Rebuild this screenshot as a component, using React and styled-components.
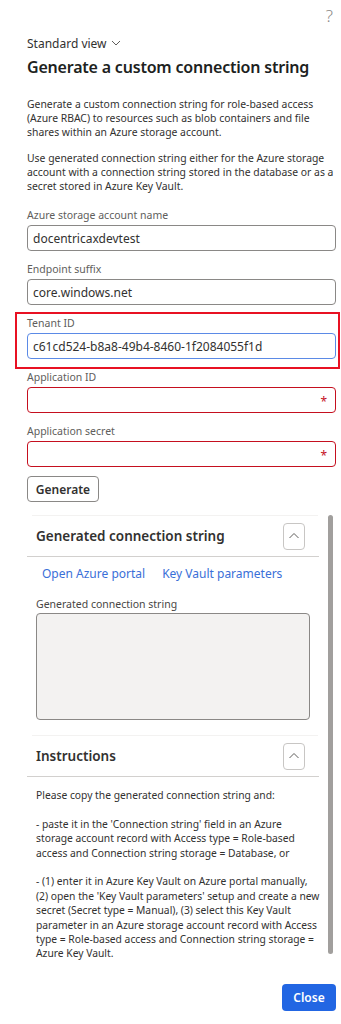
import { createGlobalStyle } from "styled-components"
import styled from "styled-components"

const GlobalStyle = createGlobalStyle`
    html, body {
        margin: 0;
        padding: 0;
        background: #ffffff;
    }
    body {
        font-family: "Segoe UI", "Noto Sans", sans-serif;
        color: #323130;
    }
`

// Chevron icons used by the view selector and the FastTab toggles
const ChevronDown = () => (
    <svg width="10" height="10" viewBox="0 0 10 10">
        <path d="M1 3 L5 7 L9 3" fill="none" stroke="#605e5c" strokeWidth="1" />
    </svg>
)

const ChevronUp = () => (
    <svg width="12" height="12" viewBox="0 0 12 12">
        <path d="M1.5 8 L6 3.5 L10.5 8" fill="none" stroke="#605e5c" strokeWidth="1" />
    </svg>
)

// One label + input pair
const Field = ({ label, value, required, focused, highlighted }) => {
    return (
        <FieldBox highlighted={highlighted}>
            <Label>{label}</Label>
            <InputBox required={required} focused={focused}>
                <span>{value}</span>
                {required && <Asterisk>*</Asterisk>}
            </InputBox>
        </FieldBox>
    )
}

const FastTab = ({ title, children }) => {
    return (
        <section>
            <Separator />
            <TabHeader>
                <TabTitle>{title}</TabTitle>
                <ToggleButton><ChevronUp /></ToggleButton>
            </TabHeader>
            {children}
        </section>
    )
}

const App = () => {
    return (
        <Page>
            <GlobalStyle />
            <HelpRow>?</HelpRow>
            <ViewSelector>Standard view <ChevronDown /></ViewSelector>
            <Title>Generate a custom connection string</Title>

            <Description>
                Generate a custom connection string for role-based access<br />
                (Azure RBAC) to resources such as blob containers and file<br />
                shares within an Azure storage account.
            </Description>
            <Description>
                Use generated connection string either for the Azure storage<br />
                account with a connection string stored in the database or as a<br />
                secret stored in Azure Key Vault.
            </Description>

            <Fields>
                <Field label="Azure storage account name" value="docentricaxdevtest" />
                <Field label="Endpoint suffix" value="core.windows.net" />
                <Field label="Tenant ID" value="c61cd524-b8a8-49b4-8460-1f2084055f1d" focused highlighted />
                <Field label="Application ID" value="" required />
                <Field label="Application secret" value="" required />
            </Fields>

            <GenerateButton>Generate</GenerateButton>

            <ScrollArea>
                <ScrollContent>
                    <FastTab title="Generated connection string">
                        <Links>
                            <Link>Open Azure portal</Link>
                            <Link>Key Vault parameters</Link>
                        </Links>
                        <OutputBlock>
                            <SmallLabel>Generated connection string</SmallLabel>
                            <OutputArea />
                        </OutputBlock>
                    </FastTab>
                    <FastTab title="Instructions">
                        <Instructions>
                            <p>Please copy the generated connection string and:</p>
                            <p>
                                - paste it in the 'Connection string' field in an Azure<br />
                                storage account record with Access type = Role-based<br />
                                access and Connection string storage = Database, or
                            </p>
                            <p>
                                - (1) enter it in Azure Key Vault on Azure portal manually,<br />
                                (2) open the 'Key Vault parameters' setup and create a new<br />
                                secret (Secret type = Manual), (3) select this Key Vault<br />
                                parameter in an Azure storage account record with Access<br />
                                type = Role-based access and Connection string storage =<br />
                                Azure Key Vault.
                            </p>
                        </Instructions>
                    </FastTab>
                </ScrollContent>
                <ScrollTrack>
                    <ScrollThumb />
                </ScrollTrack>
            </ScrollArea>

            <Footer>
                <CloseButton>Close</CloseButton>
            </Footer>
        </Page>
    )
}

const Page = styled.div`
    width: 341px;
    height: 1024px;
    box-sizing: border-box;
    padding: 0 5px 0 27px;
    display: flex;
    flex-direction: column;
    overflow: hidden;
`

const HelpRow = styled.div`
    height: 30px;
    display: flex;
    justify-content: flex-end;
    align-items: center;
    padding-right: 3px;
    font-size: 17px;
    font-weight: 300;
    color: #8a8886;
`

const ViewSelector = styled.div`
    display: flex;
    align-items: center;
    gap: 4px;
    height: 26px;
    font-size: 12px;
    color: #323130;
`

const Title = styled.h1`
    margin: 0;
    height: 22px;
    line-height: 22px;
    font-size: 16px;
    letter-spacing: -0.2px;
    font-weight: 600;
    color: #201f1e;
`

const Description = styled.p`
    margin: 19px 0 0;
    font-size: 10.4px;
    line-height: 14px;
    white-space: nowrap;
    color: #323130;

    & + & {
        margin-top: 12px;
    }
`

const Fields = styled.div`
    display: flex;
    flex-direction: column;
    gap: 11px;
    margin-top: 15px;
`

const FieldBox = styled.div`
    position: relative;
    display: flex;
    flex-direction: column;
    gap: 3px;

    &::after {
        content: "";
        display: ${({ highlighted }) => highlighted ? "block" : "none"};
        position: absolute;
        top: -4px;
        left: -12px;
        right: -4px;
        bottom: -10px;
        border: 2px solid #e81123;
        pointer-events: none;
    }
`

const Label = styled.div`
    font-size: 10.5px;
    line-height: 14px;
    color: #605e5c;
`

const InputBox = styled.div`
    height: 26px;
    box-sizing: border-box;
    display: flex;
    align-items: center;
    justify-content: space-between;
    padding: 0 8px 0 5px;
    border: 1px solid ${({ required, focused }) => required ? "#c50f1f" : focused ? "#5b8ae6" : "#8a8886"};
    border-radius: 4px;
    font-size: 12px;
    color: #323130;
    background: #ffffff;
`

const Asterisk = styled.span`
    color: #c50f1f;
    font-size: 12px;
    padding-top: 3px;
`

const GenerateButton = styled.button`
    align-self: flex-start;
    margin-top: 9px;
    width: 72px;
    height: 26px;
    border: 1px solid #8a8886;
    border-radius: 4px;
    background: #ffffff;
    font-family: inherit;
    font-size: 12px;
    font-weight: 600;
    color: #323130;
    padding: 0;
`

const ScrollArea = styled.div`
    display: flex;
    margin-top: 13px;
    height: 455px;
    overflow: hidden;
`

const ScrollContent = styled.div`
    width: 292px;
`

const ScrollTrack = styled.div`
    margin-left: 9px;
    width: 5px;
`

const ScrollThumb = styled.div`
    width: 5px;
    height: 439px;
    border-radius: 3px;
    background: #a19f9d;
`

const Separator = styled.div`
    height: 1px;
    margin: 0 1px 0 5px;
    background: #f3f2f1;
`

const TabHeader = styled.div`
    display: flex;
    align-items: center;
    justify-content: space-between;
    height: 40px;
    padding: 0 14px 0 9px;
    border-bottom: 1px solid #d2d0ce;
`

const TabTitle = styled.h2`
    margin: 0;
    font-size: 13.5px;
    font-weight: 600;
    color: #323130;
`

const ToggleButton = styled.div`
    width: 22px;
    height: 27px;
    box-sizing: border-box;
    display: flex;
    align-items: center;
    justify-content: center;
    border: 1px solid #c8c6c4;
    border-radius: 4px;
    background: #ffffff;
`

const Links = styled.div`
    display: flex;
    gap: 17px;
    padding: 7px 0 0 15px;
    height: 18px;
    align-items: center;
`

const Link = styled.span`
    font-size: 12px;
    color: #3a6fd8;
`

const OutputBlock = styled.div`
    display: flex;
    flex-direction: column;
    gap: 2px;
    padding: 16px 9px 15px 9px;
`

const SmallLabel = styled.div`
    font-size: 10.5px;
    line-height: 13px;
    color: #484644;
`

const OutputArea = styled.div`
    height: 107px;
    width: 274px;
    box-sizing: border-box;
    border: 1px solid #8a8886;
    border-radius: 4px;
    background: #f3f2f1;
`

const Instructions = styled.div`
    padding: 11px 0 0 9px;
    font-size: 10.3px;
    line-height: 14.4px;
    white-space: nowrap;
    color: #323130;

    p {
        margin: 0 0 14.4px;
    }
`

const Footer = styled.div`
    display: flex;
    justify-content: flex-end;
    margin-top: 14px;
`

const CloseButton = styled.button`
    width: 54px;
    height: 27px;
    border: none;
    border-radius: 4px;
    background: #2266e3;
    color: #ffffff;
    font-family: inherit;
    font-size: 12px;
    font-weight: 600;
    padding: 0;
`

export default App
